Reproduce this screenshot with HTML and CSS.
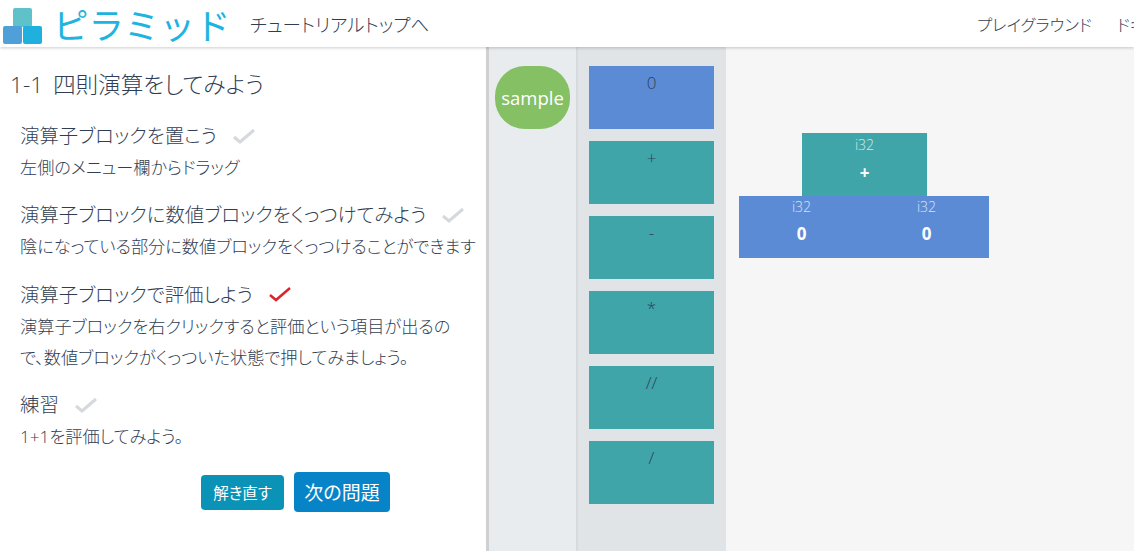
FILE: index.html
```html
<!DOCTYPE html>
<html lang="ja">
<head>
    <meta charset="UTF-8">
    <meta name="viewport" content="width=device-width, initial-scale=1.0">
    <title>ピラミッド チュートリアル</title>
    <link rel="stylesheet" href="styles.css">
</head>
<body>
    <nav class="navbar">
        <svg class="logo-icon" width="42" height="42" viewBox="0 0 42 42">
            <rect x="13" y="5" width="19" height="19" rx="2" fill="#5fc1c9"/>
            <rect x="3" y="23" width="19" height="18" rx="2" fill="#4f9fd9"/>
            <rect x="23" y="23" width="19" height="18" rx="2" fill="#1fb0de"/>
        </svg>
        <span class="logo-text">ピラミッド</span>
        <a class="nav-title">チュートリアルトップへ</a>
        <div class="nav-links">
            <a>プレイグラウンド</a>
            <a>ドキュメント</a>
        </div>
    </nav>

    <div class="main">
        <!-- Left side for the lesson text -->
        <section class="lesson">
            <h1>1-1 四則演算をしてみよう</h1>
            <div class="step">
                <div class="step-title">演算子ブロックを置こう
                    <svg class="check" width="24" height="18" viewBox="0 0 24 18"><path d="M2 10 L8 15 L22 3"/></svg>
                </div>
                <p>左側のメニュー欄からドラッグ</p>
            </div>
            <div class="step">
                <div class="step-title">演算子ブロックに数値ブロックをくっつけてみよう
                    <svg class="check" width="24" height="18" viewBox="0 0 24 18"><path d="M2 10 L8 15 L22 3"/></svg>
                </div>
                <p>陰になっている部分に数値ブロックをくっつけることができます</p>
            </div>
            <div class="step">
                <div class="step-title">演算子ブロックで評価しよう
                    <svg class="check done" width="24" height="18" viewBox="0 0 24 18"><path d="M2 10 L8 15 L22 3"/></svg>
                </div>
                <p>演算子ブロックを右クリックすると評価という項目が出るの<br>で、数値ブロックがくっついた状態で押してみましょう。</p>
            </div>
            <div class="step">
                <div class="step-title">練習
                    <svg class="check" width="24" height="18" viewBox="0 0 24 18"><path d="M2 10 L8 15 L22 3"/></svg>
                </div>
                <p>1+1を評価してみよう。</p>
            </div>
            <div class="buttons">
                <button class="btn btn-retry">解き直す</button>
                <button class="btn btn-next">次の問題</button>
            </div>
        </section>

        <!-- Category list -->
        <aside class="categories">
            <div class="category">sample</div>
        </aside>

        <!-- Block palette -->
        <aside class="palette">
            <div class="block blue">0</div>
            <div class="block teal">+</div>
            <div class="block teal">-</div>
            <div class="block teal">*</div>
            <div class="block teal">//</div>
            <div class="block teal">/</div>
        </aside>

        <!-- Free canvas, blocks sit where they were dropped -->
        <div class="canvas">
            <div class="placed teal op-block">
                <span class="type">i32</span>
                <span class="value">+</span>
            </div>
            <div class="placed blue num-block">
                <div class="slot">
                    <span class="type">i32</span>
                    <span class="value">0</span>
                </div>
                <div class="slot">
                    <span class="type">i32</span>
                    <span class="value">0</span>
                </div>
            </div>
        </div>
    </div>
</body>
</html>
```

FILE: styles.css
```css
* {
    box-sizing: border-box;
}

body {
    margin: 0;
    height: 100vh;
    overflow: hidden;
    display: flex;
    flex-direction: column;
    font-family: "Open Sans", "Noto Sans CJK JP", sans-serif;
    font-weight: 300;
    font-feature-settings: "palt";
    color: #2f3e54;
    background-color: #fff;
}

.navbar {
    height: 47px;
    flex-shrink: 0;
    display: flex;
    align-items: center;
    white-space: nowrap;
    box-shadow: 0 1px 3px rgba(0, 0, 0, 0.2);
    position: relative;
    z-index: 2;
}

.logo-icon {
    flex-shrink: 0;
}

.logo-text {
    flex-shrink: 0;
    width: 195px;
    margin-left: 11px;
    font-size: 35.5px;
    font-weight: 400;
    font-feature-settings: normal;
    color: #1fb4e0;
}

.nav-title {
    flex-shrink: 0;
    margin-left: 2px;
    width: 180px;
    font-size: 18.5px;
}

.nav-links {
    flex: 1;
    min-width: 0;
    overflow: hidden;
    display: flex;
    gap: 25px;
    margin-left: 547px;
    font-size: 16.4px;
}

.main {
    flex: 1;
    display: flex;
    min-height: 0;
}

.lesson {
    width: 489px;
    flex-shrink: 0;
    padding: 20px 0 0 10px;
    border-right: 3px solid #d0d0d0;
}

.lesson h1 {
    margin: 0 0 16px;
    font-size: 22.6px;
    font-weight: 300;
    line-height: 36px;
    word-spacing: 4px;
}

.step {
    margin: 0 0 15.4px 10px;
}

.step-title {
    display: flex;
    align-items: center;
    gap: 15px;
    font-size: 19.4px;
    line-height: 33px;
}

.check {
    fill: none;
    stroke: #d5d8dd;
    stroke-width: 3;
}

.check.done {
    stroke: #d9252b;
    stroke-width: 2.5;
}

.step p {
    margin: 0;
    white-space: nowrap;
    font-size: 17.2px;
    line-height: 31px;
}

.buttons {
    display: flex;
    align-items: center;
    gap: 10px;
    margin: 20px 0 0 191px;
}

.btn {
    border: none;
    border-radius: 4px;
    color: #fff;
    font-family: inherit;
    font-feature-settings: inherit;
    font-weight: 400;
    padding: 0;
}

.btn-retry {
    width: 83px;
    height: 35px;
    font-size: 15.5px;
    background-color: #0a93b6;
}

.btn-next {
    width: 96px;
    height: 40px;
    font-size: 19px;
    background-color: #0784c8;
}

.categories {
    width: 89px;
    flex-shrink: 0;
    padding: 19px 0 0 6px;
    background-color: #e9ecee;
    border-right: 2px solid #d8dbdd;
}

.category {
    width: 75px;
    height: 63px;
    display: flex;
    align-items: center;
    justify-content: center;
    border-radius: 30px;
    background-color: #85c065;
    color: #fff;
    font-family: "Open Sans", sans-serif;
    font-weight: 400;
    font-size: 18.5px;
}

.palette {
    width: 148px;
    flex-shrink: 0;
    display: flex;
    flex-direction: column;
    gap: 12px;
    padding: 19px 0 0 11px;
    background-color: #e1e4e6;
}

.block {
    width: 125px;
    height: 63px;
    flex-shrink: 0;
    text-align: center;
    font-size: 17px;
    line-height: 34px;
}

.blue {
    background-color: #5c8bd5;
}

.teal {
    background-color: #3fa5a9;
}

.canvas {
    flex: 1;
    position: relative;
    background-color: #f6f6f6;
}

.placed {
    position: absolute;
    color: #fff;
    text-align: center;
}

.op-block {
    left: 76px;
    top: 86px;
    width: 125px;
    height: 63px;
}

.num-block {
    left: 13px;
    top: 149px;
    width: 250px;
    height: 62px;
    display: flex;
}

.slot {
    width: 125px;
    margin-top: -1px;
}

.slot .value {
    margin-top: 3px;
}

.type {
    display: block;
    height: 24px;
    font-size: 14px;
    line-height: 24px;
    opacity: 0.75;
}

.value {
    display: block;
    margin-top: 4px;
    font-family: "Open Sans", sans-serif;
    font-size: 17px;
    font-weight: 700;
    line-height: 24px;
}
```
